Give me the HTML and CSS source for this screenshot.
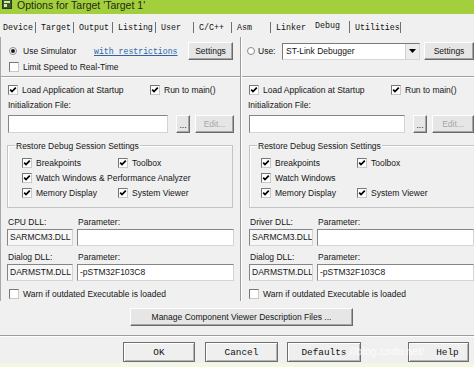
FILE: index.html
```html
<!DOCTYPE html>
<html lang="en">
<head>
<meta charset="utf-8">
<title>Options for Target</title>
<link rel="stylesheet" href="styles.css">
</head>
<body>
<div class="win">
  <div class="titlebar">
    <span class="ticon"><svg width="10" height="10" viewBox="0 0 10 10"><rect x="0.5" y="0.5" width="9" height="9" fill="#3c5a2a" stroke="#26391a"/><rect x="2" y="2" width="6" height="2" fill="#d6e8b0"/><rect x="2" y="5" width="3" height="3" fill="#d6e8b0"/></svg></span>
    <span class="title">Options for Target 'Target 1'</span>
  </div>
  <div class="tabs">
    <span class="tab first">Device</span>
    <span class="tab">Target</span>
    <span class="tab">Output</span>
    <span class="tab">Listing</span>
    <span class="tab">User</span>
    <span class="tab">C/C++</span>
    <span class="tab">Asm</span>
    <span class="tab noline">Linker</span>
    <span class="tab active">Debug</span>
    <span class="tab">Utilities</span>
  </div>
  <div class="panels">
    <div class="panel left">
      <div class="row r-sim">
        <span class="rb on"></span>
        <span class="lbl w-sim">Use Simulator</span>
        <span class="link">with restrictions</span>
        <span class="btn settings">Settings</span>
      </div>
      <div class="row r-limit">
        <span class="cb"></span><span class="lbl">Limit Speed to Real-Time</span>
      </div>
      <div class="sep"></div>
      <div class="r-load">
        <span class="item"><span class="cb"><svg width="8" height="8" viewBox="0 0 8 8"><path d="M1.2 3.6 L3 5.6 L6.8 1.6" fill="none" stroke="#000" stroke-width="1.7"/></svg></span><span class="lbl">Load Application at Startup</span></span>
        <span class="item"><span class="cb"><svg width="8" height="8" viewBox="0 0 8 8"><path d="M1.2 3.6 L3 5.6 L6.8 1.6" fill="none" stroke="#000" stroke-width="1.7"/></svg></span><span class="lbl">Run to main()</span></span>
      </div>
      <div class="flabel">Initialization File:</div>
      <div class="row r-file">
        <span class="input file"></span>
        <span class="btn dots">...</span>
        <span class="btn edit">Edit...</span>
      </div>
      <div class="group">
        <div class="legend">Restore Debug Session Settings</div>
        <div class="grid2">
          <span class="item"><span class="cb"><svg width="8" height="8" viewBox="0 0 8 8"><path d="M1.2 3.6 L3 5.6 L6.8 1.6" fill="none" stroke="#000" stroke-width="1.7"/></svg></span><span class="lbl">Breakpoints</span></span>
          <span class="item"><span class="cb"><svg width="8" height="8" viewBox="0 0 8 8"><path d="M1.2 3.6 L3 5.6 L6.8 1.6" fill="none" stroke="#000" stroke-width="1.7"/></svg></span><span class="lbl">Toolbox</span></span>
          <span class="item span2"><span class="cb"><svg width="8" height="8" viewBox="0 0 8 8"><path d="M1.2 3.6 L3 5.6 L6.8 1.6" fill="none" stroke="#000" stroke-width="1.7"/></svg></span><span class="lbl">Watch Windows &amp; Performance Analyzer</span></span>
          <span class="item"><span class="cb"><svg width="8" height="8" viewBox="0 0 8 8"><path d="M1.2 3.6 L3 5.6 L6.8 1.6" fill="none" stroke="#000" stroke-width="1.7"/></svg></span><span class="lbl">Memory Display</span></span>
          <span class="item"><span class="cb"><svg width="8" height="8" viewBox="0 0 8 8"><path d="M1.2 3.6 L3 5.6 L6.8 1.6" fill="none" stroke="#000" stroke-width="1.7"/></svg></span><span class="lbl">System Viewer</span></span>
        </div>
      </div>
      <div class="dll">
        <span class="dlabel">CPU DLL:</span><span class="dlabel">Parameter:</span>
        <span class="input dname">SARMCM3.DLL</span><span class="input"></span>
        <span class="dlabel">Dialog DLL:</span><span class="dlabel">Parameter:</span>
        <span class="input dname">DARMSTM.DLL</span><span class="input">-pSTM32F103C8</span>
      </div>
      <div class="row r-warn">
        <span class="cb"></span><span class="lbl">Warn if outdated Executable is loaded</span>
      </div>
    </div>

    <div class="panel right">
      <div class="row r-sim">
        <span class="rb"></span>
        <span class="lbl w-use">Use:</span>
        <span class="select"><span class="val">ST-Link Debugger</span><span class="arrow"><svg width="7" height="4" viewBox="0 0 7 4"><path d="M0 0 H7 L3.5 4 Z" fill="#000"/></svg></span></span>
        <span class="btn settings">Settings</span>
      </div>
      <div class="row r-limit"></div>
      <div class="sep"></div>
      <div class="r-load">
        <span class="item"><span class="cb"><svg width="8" height="8" viewBox="0 0 8 8"><path d="M1.2 3.6 L3 5.6 L6.8 1.6" fill="none" stroke="#000" stroke-width="1.7"/></svg></span><span class="lbl">Load Application at Startup</span></span>
        <span class="item"><span class="cb"><svg width="8" height="8" viewBox="0 0 8 8"><path d="M1.2 3.6 L3 5.6 L6.8 1.6" fill="none" stroke="#000" stroke-width="1.7"/></svg></span><span class="lbl">Run to main()</span></span>
      </div>
      <div class="flabel">Initialization File:</div>
      <div class="row r-file">
        <span class="input file"></span>
        <span class="btn dots">...</span>
        <span class="btn edit">Edit...</span>
      </div>
      <div class="group">
        <div class="legend">Restore Debug Session Settings</div>
        <div class="grid2">
          <span class="item"><span class="cb"><svg width="8" height="8" viewBox="0 0 8 8"><path d="M1.2 3.6 L3 5.6 L6.8 1.6" fill="none" stroke="#000" stroke-width="1.7"/></svg></span><span class="lbl">Breakpoints</span></span>
          <span class="item"><span class="cb"><svg width="8" height="8" viewBox="0 0 8 8"><path d="M1.2 3.6 L3 5.6 L6.8 1.6" fill="none" stroke="#000" stroke-width="1.7"/></svg></span><span class="lbl">Toolbox</span></span>
          <span class="item span2"><span class="cb"><svg width="8" height="8" viewBox="0 0 8 8"><path d="M1.2 3.6 L3 5.6 L6.8 1.6" fill="none" stroke="#000" stroke-width="1.7"/></svg></span><span class="lbl">Watch Windows</span></span>
          <span class="item"><span class="cb"><svg width="8" height="8" viewBox="0 0 8 8"><path d="M1.2 3.6 L3 5.6 L6.8 1.6" fill="none" stroke="#000" stroke-width="1.7"/></svg></span><span class="lbl">Memory Display</span></span>
          <span class="item"><span class="cb"><svg width="8" height="8" viewBox="0 0 8 8"><path d="M1.2 3.6 L3 5.6 L6.8 1.6" fill="none" stroke="#000" stroke-width="1.7"/></svg></span><span class="lbl">System Viewer</span></span>
        </div>
      </div>
      <div class="dll">
        <span class="dlabel">Driver DLL:</span><span class="dlabel">Parameter:</span>
        <span class="input dname">SARMCM3.DLL</span><span class="input"></span>
        <span class="dlabel">Dialog DLL:</span><span class="dlabel">Parameter:</span>
        <span class="input dname">DARMSTM.DLL</span><span class="input">-pSTM32F103C8</span>
      </div>
      <div class="row r-warn">
        <span class="cb"></span><span class="lbl">Warn if outdated Executable is loaded</span>
      </div>
    </div>
  </div>

  <div class="manage-row"><span class="btn manage">Manage Component Viewer Description Files ...</span></div>
  <div class="hsep"></div>
  <div class="footer">
    <span class="btn fbtn ok">OK</span>
    <span class="btn fbtn cancel">Cancel</span>
    <span class="btn fbtn defaults">Defaults</span>
    <span class="btn fbtn help">Help</span>
    <span class="watermark">//blog.csdn.net/</span>
  </div>
  <div class="strip"></div>
</div>
</body>
</html>
```

FILE: styles.css
```css
* { box-sizing: border-box; margin: 0; padding: 0; }
html, body { width: 474px; height: 367px; overflow: hidden; }
body {
  background: #f0f0f0;
  font-family: "Liberation Sans", Arial, sans-serif;
  font-size: 8.5px;
  color: #151515;
}
.win { display: flex; flex-direction: column; height: 367px; }

/* title bar */
.titlebar {
  flex: none; height: 14px; background: #a4cf3d;
  display: flex; align-items: flex-start; padding-left: 2px; overflow: hidden;
}
.ticon { display: block; width: 10px; height: 10px; margin-top: -1px; }
.ticon svg { display: block; }
.title {
  font-size: 10.5px; line-height: 12px; margin: -1px 0 0 5px;
  color: #1d2a12; white-space: nowrap;
}

/* tabs */
.tabs {
  flex: none; height: 23px; display: grid;
  grid-template-columns: 36px 38px 39px 43px 38px 38px 39px 39px 40px 51px;
  align-items: start;
  font-family: "Liberation Mono", monospace; font-size: 8.3px; color: #111;
}
.tab {
  margin-top: 8px; height: 11px; line-height: 11px; padding-left: 5px;
  border-right: 1px solid #707070; white-space: nowrap;
}
.tab.first { padding-left: 3px; }
.tab.noline { border-right-color: transparent; }
.tab.active { margin-top: 7px; height: 12px; line-height: 10px; }

/* panels */
.panels { flex: none; height: 264px; display: grid; grid-template-columns: 241px 1fr; }
.panel { overflow: hidden; display: flex; flex-direction: column; min-width: 0; }
.left { border-left: 1px solid #a8a8a8; border-right: 1px solid #9a9a9a; }
.right { border-left: 1px solid #ffffff; }

.row { display: flex; align-items: center; flex: none; }
.lbl { white-space: nowrap; }

.r-sim { margin-top: 5px; height: 18px; }
.left .r-sim { padding-left: 8px; }
.right .r-sim { padding-left: 5px; }

.rb {
  width: 8px; height: 8px; border-radius: 50%;
  border: 1px solid #8a8a8a; background: #fff; flex: none;
  display: flex; align-items: center; justify-content: center;
}
.rb.on::after { content: ""; width: 4px; height: 4px; border-radius: 50%; background: #1a1a1a; }

.w-sim { margin-left: 6px; width: 71px; }
.w-use { margin-left: 3px; width: 27px; }
.link {
  font-family: "Liberation Mono", monospace; font-size: 8.2px;
  color: #2c64a8; text-decoration: underline; width: 82px; white-space: nowrap;
}

.btn {
  display: flex; align-items: center; justify-content: center; flex: none;
  background: #e6e6e6; white-space: nowrap;
  border: 1px solid; border-color: #ffffff #6a6a6a #6a6a6a #ffffff;
  box-shadow: inset -1px -1px 0 #a5a5a5;
}
.settings { height: 18px; margin-left: 12px; width: 45px; }
.right .settings { margin-left: 4px; width: 50px; }

.select {
  width: 138px; height: 17px; background: #fff; flex: none;
  border: 1px solid; border-color: #7a7a7a #d6d6d6 #d6d6d6 #7a7a7a;
  display: flex; align-items: center;
}
.select .val { flex: 1; padding-left: 3px; white-space: nowrap; }
.select .arrow {
  width: 14px; height: 15px; background: #ececec;
  border-left: 1px solid #d0d0d0;
  display: flex; align-items: center; justify-content: center;
}
.select .arrow svg { display: block; }

.r-limit { height: 14px; }
.left .r-limit { padding-left: 8px; }

.cb {
  width: 10px; height: 10px; flex: none; background: #fff;
  border: 1px solid; border-color: #777 #c8c8c8 #c8c8c8 #777;
  display: flex; align-items: center; justify-content: center;
}
.cb svg { display: block; }
.cb + .lbl { margin-left: 4px; }

.sep { flex: none; margin-top: 2px; height: 2px; border-top: 1px solid #a0a0a0; border-bottom: 1px solid #fff; }

.r-load {
  flex: none; margin-top: 5px; height: 14px; padding-left: 7px;
  display: grid; grid-template-columns: 142px auto; align-items: center;
}
.item { display: flex; align-items: center; }

.flabel { flex: none; margin-top: 1px; height: 14px; line-height: 14px; padding-left: 7px; white-space: nowrap; }
.right .flabel { padding-left: 6px; }

.r-file { margin-top: 3px; height: 18px; padding-left: 7px; }
.input {
  display: block; height: 17px; line-height: 15px; padding-left: 2px;
  background: #fff; white-space: nowrap; overflow: hidden;
  border: 1px solid; border-color: #858585 #d4d4d4 #d4d4d4 #858585;
}
.input.file { width: 160px; height: 18px; }
.dots { margin-left: 8px; width: 14px; height: 18px; align-items: flex-end; padding-bottom: 3px; line-height: 8px; }
.edit { margin-left: 5px; width: 39px; height: 18px; color: #a6a6a6; }
.right .edit { width: 42px; }

/* group box */
.group {
  flex: none; margin-top: 12px; margin-left: 6px; width: 226px;
  border: 1px solid #c4c4c4; box-shadow: 1px 1px 0 #fff inset;
}
.right .group { margin-left: 7px; width: 240px; }
.legend {
  width: max-content; margin: -7px 0 0 7px; padding: 0 1px;
  height: 14px; line-height: 14px; background: #f0f0f0; white-space: nowrap;
}
.grid2 {
  display: grid; grid-template-columns: 96px auto; grid-auto-rows: 15px;
  align-items: center; padding: 2px 0 7px 14px;
}
.right .grid2 { padding-left: 11px; }
.span2 { grid-column: 1 / 3; }

/* dll */
.dll {
  flex: none; margin-top: 6px; margin-left: 6px;
  display: grid; grid-template-columns: 66px 157px; column-gap: 4px;
  grid-template-rows: 15px 17px 18px 17px;
}
.right .dll { margin-left: 7px; grid-template-columns: 64px 1fr; }
.dlabel { align-self: end; height: 14px; line-height: 14px; padding-left: 1px; white-space: nowrap; }
.input.dname { background: #f7f7f7; padding-left: 2px; }

.r-warn { margin-top: 6px; height: 14px; padding-left: 8px; }
.right .r-warn { padding-left: 7px; }

/* bottom */
.manage-row { flex: none; margin-top: 7px; height: 18px; display: flex; padding-left: 130px; }
.manage { width: 223px; height: 18px; }

.hsep { flex: none; margin-top: 9px; height: 2px; border-top: 1px solid #9c9c9c; border-bottom: 1px solid #fff; }

.footer { flex: none; position: relative; margin-top: 5px; height: 20px; display: flex; }
.fbtn {
  height: 20px; background: #efefef;
  font-family: "Liberation Mono", monospace; font-size: 9.4px; color: #111;
  border: 1px solid #6e6e6e; box-shadow: inset 1px 1px 0 #fff, inset -1px -1px 0 #b4b4b4;
}
.ok { margin-left: 123px; width: 72px; }
.cancel { margin-left: 10px; width: 73px; }
.defaults { margin-left: 9px; width: 74px; }
.help { margin-left: 47px; width: 61px; padding-left: 18px; }
.watermark {
  position: absolute; left: 350px; top: 3px;
  font-size: 11px; line-height: 13px; color: rgba(255, 255, 255, 0.8);
  white-space: nowrap; pointer-events: none;
}

.strip { flex: 1; margin-top: 1px; background: #f3f8e3; }
```
